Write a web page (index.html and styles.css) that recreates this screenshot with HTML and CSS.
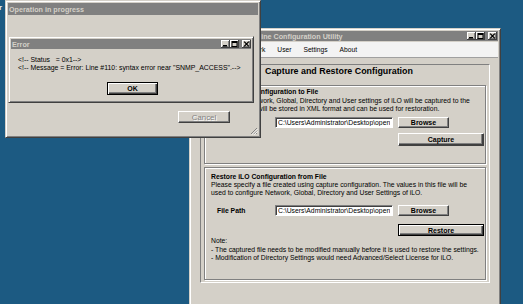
FILE: index.html
```html
<!DOCTYPE html>
<html>
<head>
<meta charset="utf-8">
<title>HP Lights-Out Online Configuration Utility</title>
<link rel="stylesheet" href="styles.css">
</head>
<body>
<div class="desktop">
  <span class="icon-label">r</span>

  <div class="win main-win">
    <div class="titlebar main-title">
      <span class="title">HP Lights-Out Online Configuration Utility</span>
      <div class="ctrls">
        <span class="cbtn"><svg width="7" height="6" viewBox="0 0 7 6"><rect x="1" y="4" width="4" height="1.5" fill="#000"/></svg></span>
        <span class="cbtn"><svg width="7" height="6" viewBox="0 0 7 6"><rect x="1" y="0.5" width="5" height="5" fill="none" stroke="#000" stroke-width="1"/><rect x="1" y="0.5" width="5" height="1.5" fill="#000"/></svg></span>
        <span class="cbtn cbtn-close"><svg width="7" height="6" viewBox="0 0 7 6"><path d="M1.2 0.6 L5.8 5.4 M5.8 0.6 L1.2 5.4" stroke="#000" stroke-width="1.3"/></svg></span>
      </div>
    </div>
    <nav class="menubar">
      <span class="menu-item">File</span>
      <span class="menu-item">Network</span>
      <span class="menu-item">User</span>
      <span class="menu-item">Settings</span>
      <span class="menu-item">About</span>
    </nav>
    <div class="client">
      <div class="panel">
        <h1 class="heading">Capture and Restore Configuration</h1>

        <section class="group group-capture">
          <h2 class="group-title">Capture iLO Configuration to File</h2>
          <p class="desc">The current Network, Global, Directory and User settings of iLO will be captured to the<br>specified file. It will be stored in XML format and can be used for restoration.</p>
          <div class="field-row">
            <label class="field-label">File Path</label>
            <input class="field" type="text" value="C:\Users\Administrator\Desktop\openldap_config.xml" readonly>
            <button class="btn btn-browse">Browse</button>
          </div>
          <button class="btn btn-action btn-capture">Capture</button>
        </section>

        <section class="group group-restore">
          <h2 class="group-title">Restore iLO Configuration from File</h2>
          <p class="desc">Please specify a file created using capture configuration. The values in this file will be<br>used to configure Network, Global, Directory and User Settings of iLO.</p>
          <div class="field-row field-row-restore">
            <label class="field-label">File Path</label>
            <input class="field" type="text" value="C:\Users\Administrator\Desktop\openldap_config.xml" readonly>
            <button class="btn btn-browse">Browse</button>
          </div>
          <button class="btn btn-action btn-default btn-restore">Restore</button>
          <p class="note">Note:<br>- The captured file needs to be modified manually before it is used to restore the settings.<br>- Modification of Directory Settings would need Advanced/Select License for iLO.</p>
        </section>
      </div>
    </div>
  </div>

  <div class="win op-win">
    <div class="titlebar op-title">
      <span class="title">Operation in progress</span>
    </div>
    <div class="op-body">
      <button class="btn btn-cancel" disabled>Cancel</button>
    </div>
    <svg class="grip" width="8" height="8" viewBox="0 0 8 8">
      <path d="M7 1 L1 7 M7 3.5 L3.5 7 M7 6 L6 7" stroke="#808080" stroke-width="1"/>
      <path d="M7.8 1.8 L1.8 7.8 M7.8 4.3 L4.3 7.8" stroke="#fff" stroke-width="0.8"/>
    </svg>
  </div>

  <div class="win err-win">
    <div class="titlebar err-title">
      <span class="title">Error</span>
      <div class="ctrls">
        <span class="cbtn"><svg width="7" height="6" viewBox="0 0 7 6"><rect x="1" y="4" width="4" height="1.5" fill="#000"/></svg></span>
        <span class="cbtn"><svg width="7" height="6" viewBox="0 0 7 6"><rect x="1" y="0.5" width="5" height="5" fill="none" stroke="#000" stroke-width="1"/><rect x="1" y="0.5" width="5" height="1.5" fill="#000"/></svg></span>
        <span class="cbtn cbtn-close"><svg width="7" height="6" viewBox="0 0 7 6"><path d="M1.2 0.6 L5.8 5.4 M5.8 0.6 L1.2 5.4" stroke="#000" stroke-width="1.3"/></svg></span>
      </div>
    </div>
    <div class="err-body">
      <p class="err-line">&lt;!-- Status   = 0x1--&gt;</p>
      <p class="err-line">&lt;!-- Message = Error: Line #110: syntax error near "SNMP_ACCESS".--&gt;</p>
      <div class="err-actions">
        <button class="btn btn-default btn-ok">OK</button>
      </div>
    </div>
  </div>
</div>
</body>
</html>
```

FILE: styles.css
```css
* {
  box-sizing: border-box;
  margin: 0;
  padding: 0;
}

html, body {
  width: 523px;
  height: 304px;
  overflow: hidden;
}

body {
  font-family: "Liberation Sans", Arial, sans-serif;
  font-size: 6.8px;
  color: #000;
  background: #1c5a82;
}

.desktop {
  position: relative;
  width: 523px;
  height: 304px;
  overflow: hidden;
  background: #1c5a82;
}

.icon-label {
  position: absolute;
  left: -1px;
  top: 3px;
  color: #e8eef2;
  font-size: 8px;
  font-weight: bold;
}

/* ---------- window chrome ---------- */
.win {
  position: absolute;
  display: flex;
  flex-direction: column;
  background: #d4d0c8;
  border: 1px solid;
  border-color: #d4d0c8 #404040 #404040 #d4d0c8;
  box-shadow: inset 1px 1px 0 #fff, inset -1px -1px 0 #808080;
  padding: 2px;
}

.titlebar {
  display: flex;
  align-items: center;
  flex: none;
  background: #808080;
  color: #d4d0c8;
  font-weight: bold;
  font-size: 7.2px;
  white-space: nowrap;
  overflow: hidden;
}

.ctrls {
  display: flex;
  align-items: center;
  margin-left: auto;
}

.cbtn {
  display: flex;
  align-items: center;
  justify-content: center;
  width: 9px;
  height: 8px;
  background: #d4d0c8;
  box-shadow: inset -1px -1px 0 #404040, inset 1px 1px 0 #fff, inset -2px -2px 0 #808080;
}

.cbtn-close {
  margin-left: 3px;
}

/* ---------- main window ---------- */
.main-win {
  left: 189px;
  top: 28px;
  width: 312px;
  height: 290px;
}

.main-title {
  height: 10px;
  padding-left: 7px;
  padding-right: 1px;
}

.menubar {
  display: flex;
  align-items: center;
  flex: none;
  height: 16px;
  margin-top: 1px;
  padding-left: 20px;
  background: #f3f3f3;
  border-bottom: 1px solid #a0a0a0;
  font-size: 6.7px;
}

.menu-item {
  padding: 0 6px;
}

.client {
  flex: 1;
  padding: 6px 8px 0 8px;
}

.panel {
  border: 1px solid;
  border-color: #808080 #fff #fff #808080;
  padding: 0 2px 2px 3px;
}

.heading {
  font-size: 8.9px;
  font-weight: bold;
  line-height: 12px;
  height: 12px;
  padding-left: 61px;
  white-space: nowrap;
}

.group {
  border: 1px solid #808080;
  box-shadow: 1px 1px 0 #fff, inset 1px 1px 0 #fff;
  padding-left: 6px;
  margin-right: 1px;
}

.group-capture {
  margin-top: 8px;
  height: 79px;
  padding-top: 2px;
}

.group-restore {
  margin-top: 3px;
  height: 113px;
  padding-top: 5px;
}

.group-title {
  font-size: 6.8px;
  font-weight: bold;
  line-height: 8px;
  white-space: nowrap;
}

.desc {
  line-height: 8px;
  white-space: nowrap;
}

.group-capture .desc {
  margin-top: 1px;
}

.field-row {
  display: flex;
  align-items: center;
  height: 11px;
  margin-top: 4px;
}

.field-row-restore {
  margin-top: 8px;
}

.field-label {
  width: 58px;
  margin-left: 6px;
  font-weight: bold;
  font-size: 6.8px;
}

.field {
  width: 118px;
  height: 11px;
  padding: 0 2px;
  background: #fff;
  border: 1px solid;
  border-color: #808080 #fff #fff #808080;
  box-shadow: inset 1px 1px 0 #404040;
  font-family: "Liberation Sans", Arial, sans-serif;
  font-size: 6.8px;
  color: #000;
  outline: none;
}

.btn {
  display: flex;
  align-items: center;
  justify-content: center;
  font-family: "Liberation Sans", Arial, sans-serif;
  font-weight: bold;
  font-size: 7px;
  color: #000;
  background: #d4d0c8;
  border: 1px solid;
  border-color: #fff #404040 #404040 #fff;
  box-shadow: inset -1px -1px 0 #808080;
  padding: 0;
}

.btn-default {
  border: 1px solid #000;
  box-shadow: inset 1px 1px 0 #fff, inset -1px -1px 0 #404040, inset -2px -2px 0 #808080;
}

.btn-browse {
  width: 51px;
  height: 11px;
  margin-left: 5px;
}

.btn-action {
  width: 86px;
  margin-left: 187px;
}

.btn-capture {
  height: 13px;
  margin-top: 5px;
  box-shadow: inset -1px -1px 0 #404040, inset -2px -2px 0 #808080;
}

.btn-restore {
  height: 12px;
  margin-top: 8px;
}

.note {
  margin-top: 1px;
  line-height: 8.5px;
  white-space: nowrap;
}

/* ---------- operation window ---------- */
.op-win {
  left: 5px;
  top: 0;
  width: 256px;
  height: 138px;
}

.op-title {
  height: 12px;
  padding-left: 1px;
}

.op-body {
  flex: 1;
  display: flex;
  flex-direction: column;
  align-items: flex-end;
  padding-right: 28px;
}

.btn-cancel {
  width: 52px;
  height: 12px;
  margin-top: 96px;
  font-weight: normal;
  font-size: 7.8px;
  color: #808080;
  text-shadow: 1px 1px 0 #fff;
}

.grip {
  position: absolute;
  right: 2px;
  bottom: 2px;
}

/* ---------- error dialog ---------- */
.err-win {
  left: 8px;
  top: 36px;
  width: 246px;
  height: 67px;
}

.err-title {
  height: 10px;
  padding-left: 1px;
}

.err-body {
  flex: 1;
  padding: 7px 7px 0 7px;
}

.err-line {
  font-size: 6.9px;
  line-height: 8px;
  white-space: pre;
}

.err-actions {
  display: flex;
  justify-content: center;
  margin-top: 10px;
  padding-left: 3px;
}

.btn-ok {
  width: 51px;
  height: 13px;
}
```
